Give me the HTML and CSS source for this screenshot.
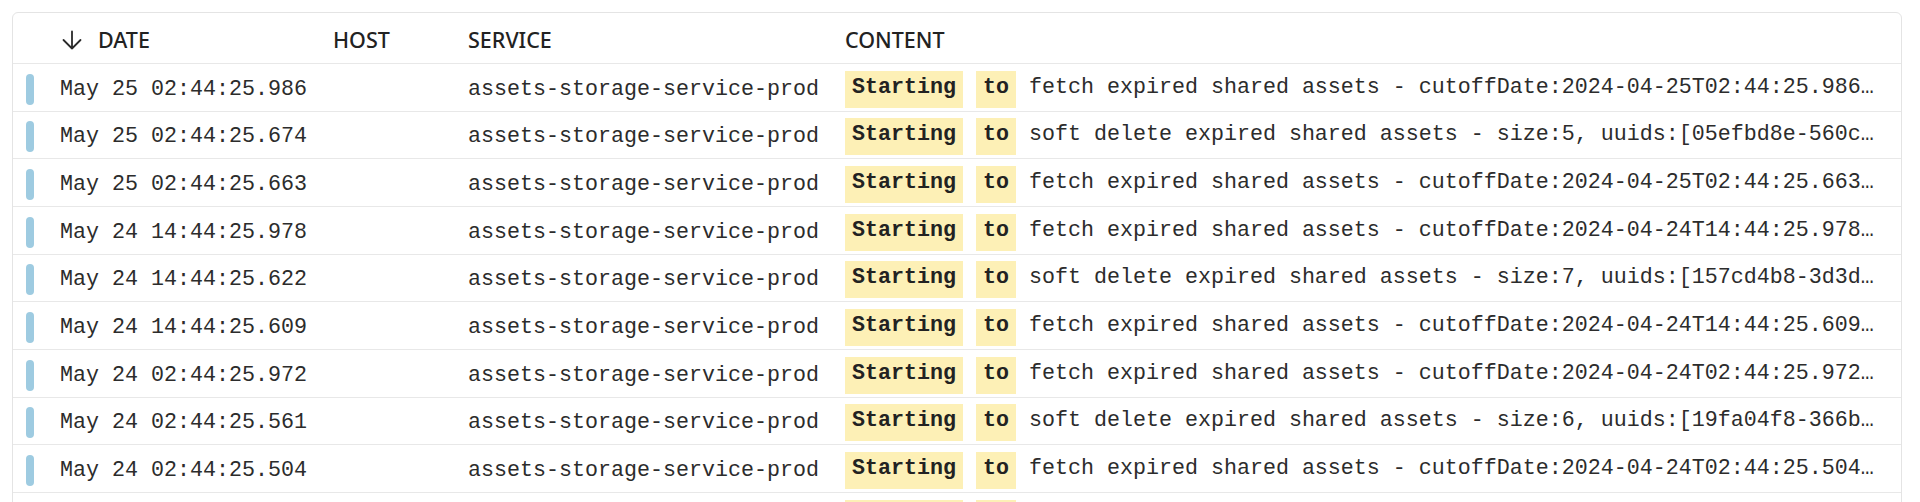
FILE: index.html
```html
<!DOCTYPE html>
<html lang="en">
<head>
<meta charset="utf-8">
<title>Logs</title>
<link rel="stylesheet" href="styles.css">
</head>
<body>
<div class="card">
  <div class="row head">
    <div class="cell c-date"><svg class="sort" width="22" height="20" viewBox="0 0 22 20"><path d="M11 1.5V18.5M2.5 10L11 18.5L19.5 10" fill="none" stroke="#2a2a2a" stroke-width="1.8" stroke-linecap="round" stroke-linejoin="round"/></svg><span>DATE</span></div>
    <div class="cell">HOST</div>
    <div class="cell">SERVICE</div>
    <div class="cell">CONTENT</div>
  </div>

  <div class="row log">
    <div class="cell c-date"><i class="bar"></i><span>May 25 02:44:25.986</span></div>
    <div class="cell"></div>
    <div class="cell">assets-storage-service-prod</div>
    <div class="cell msg"><b class="hl">Starting</b> <b class="hl">to</b> fetch expired shared assets - cutoffDate:2024-04-25T02:44:25.986…</div>
  </div>
  <div class="row log">
    <div class="cell c-date"><i class="bar"></i><span>May 25 02:44:25.674</span></div>
    <div class="cell"></div>
    <div class="cell">assets-storage-service-prod</div>
    <div class="cell msg"><b class="hl">Starting</b> <b class="hl">to</b> soft delete expired shared assets - size:5, uuids:[05efbd8e-560c…</div>
  </div>
  <div class="row log">
    <div class="cell c-date"><i class="bar"></i><span>May 25 02:44:25.663</span></div>
    <div class="cell"></div>
    <div class="cell">assets-storage-service-prod</div>
    <div class="cell msg"><b class="hl">Starting</b> <b class="hl">to</b> fetch expired shared assets - cutoffDate:2024-04-25T02:44:25.663…</div>
  </div>
  <div class="row log">
    <div class="cell c-date"><i class="bar"></i><span>May 24 14:44:25.978</span></div>
    <div class="cell"></div>
    <div class="cell">assets-storage-service-prod</div>
    <div class="cell msg"><b class="hl">Starting</b> <b class="hl">to</b> fetch expired shared assets - cutoffDate:2024-04-24T14:44:25.978…</div>
  </div>
  <div class="row log">
    <div class="cell c-date"><i class="bar"></i><span>May 24 14:44:25.622</span></div>
    <div class="cell"></div>
    <div class="cell">assets-storage-service-prod</div>
    <div class="cell msg"><b class="hl">Starting</b> <b class="hl">to</b> soft delete expired shared assets - size:7, uuids:[157cd4b8-3d3d…</div>
  </div>
  <div class="row log">
    <div class="cell c-date"><i class="bar"></i><span>May 24 14:44:25.609</span></div>
    <div class="cell"></div>
    <div class="cell">assets-storage-service-prod</div>
    <div class="cell msg"><b class="hl">Starting</b> <b class="hl">to</b> fetch expired shared assets - cutoffDate:2024-04-24T14:44:25.609…</div>
  </div>
  <div class="row log">
    <div class="cell c-date"><i class="bar"></i><span>May 24 02:44:25.972</span></div>
    <div class="cell"></div>
    <div class="cell">assets-storage-service-prod</div>
    <div class="cell msg"><b class="hl">Starting</b> <b class="hl">to</b> fetch expired shared assets - cutoffDate:2024-04-24T02:44:25.972…</div>
  </div>
  <div class="row log">
    <div class="cell c-date"><i class="bar"></i><span>May 24 02:44:25.561</span></div>
    <div class="cell"></div>
    <div class="cell">assets-storage-service-prod</div>
    <div class="cell msg"><b class="hl">Starting</b> <b class="hl">to</b> soft delete expired shared assets - size:6, uuids:[19fa04f8-366b…</div>
  </div>
  <div class="row log">
    <div class="cell c-date"><i class="bar"></i><span>May 24 02:44:25.504</span></div>
    <div class="cell"></div>
    <div class="cell">assets-storage-service-prod</div>
    <div class="cell msg"><b class="hl">Starting</b> <b class="hl">to</b> fetch expired shared assets - cutoffDate:2024-04-24T02:44:25.504…</div>
  </div>
  <div class="row log">
    <div class="cell c-date"><i class="bar"></i><span>May 24 02:44:25.498</span></div>
    <div class="cell"></div>
    <div class="cell">assets-storage-service-prod</div>
    <div class="cell msg"><b class="hl">Starting</b> <b class="hl">to</b> soft delete expired shared assets - size:4, uuids:[0a3c91e2-77d1…</div>
  </div>
</div>
</body>
</html>
```

FILE: styles.css
```css
html, body {
  height: 100%;
}
body {
  margin: 0;
  padding: 12px 18px 0 12px;
  box-sizing: border-box;
  background: #ffffff;
  overflow: hidden;
  color: #2e2e2e;
}
.card {
  border: 1px solid #e4e4e4;
  border-radius: 6px;
  background: #ffffff;
}
.row {
  display: grid;
  grid-template-columns: 320px 135px 377px 1fr;
  align-items: center;
  border-bottom: 1px solid #e8e8e8;
}
.head {
  font-family: "Noto Sans", "Open Sans", sans-serif;
  font-size: 21.5px;
  font-weight: 500;
  color: #222222;
  padding-top: 3px;
  box-sizing: border-box;
  height: 51px;
}
.head .c-date {
  padding-left: 48px;
  display: flex;
  align-items: center;
  gap: 15px;
}
.sort {
  display: block;
}
.log {
  height: 47.67px;
  box-sizing: border-box;
  padding-top: 4px;
  font-family: "Liberation Mono", "DejaVu Sans Mono", monospace;
  font-size: 21.67px;
  color: #2c2c2c;
}
.cell {
  white-space: nowrap;
  overflow: hidden;
}
.log .c-date {
  display: flex;
  align-items: center;
  padding-left: 13px;
  gap: 26px;
}
.bar {
  display: block;
  width: 8px;
  height: 31px;
  border-radius: 4px;
  background: #9ecbe1;
}
.msg {
  padding-right: 20px;
}
.hl {
  display: inline-block;
  background: #fdf0b6;
  font-weight: 700;
  color: #222222;
  padding: 4px 7px 7px;
  line-height: 26px;
}
```
